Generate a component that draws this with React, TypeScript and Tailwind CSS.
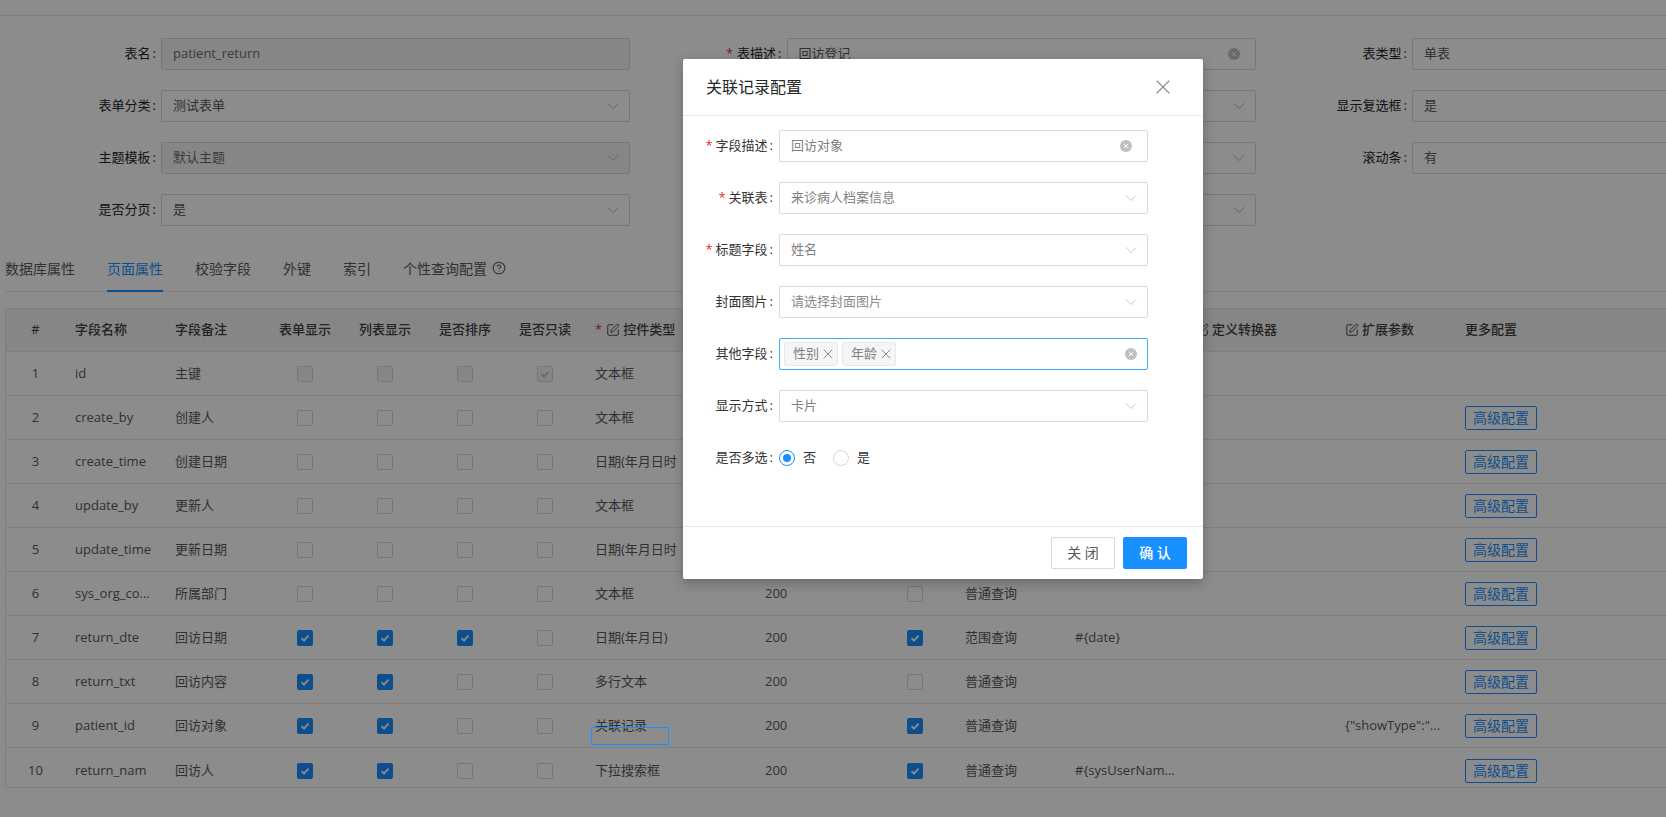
import { ChevronDown, CircleHelp, SquarePen, X } from "lucide-react"

const font = "font-['Open_Sans','Noto_Sans_CJK_SC',sans-serif]"

type FieldRow = {
  name: string
  note: string
  form?: boolean
  list?: boolean
  sort?: boolean
  control: string
  query?: boolean
  queryType?: string
  dict?: string
  ext?: string
}

const rows: FieldRow[] = [
  { name: "id", note: "主键", control: "文本框" },
  { name: "create_by", note: "创建人", control: "文本框" },
  { name: "create_time", note: "创建日期", control: "日期(年月日时" },
  { name: "update_by", note: "更新人", control: "文本框" },
  { name: "update_time", note: "更新日期", control: "日期(年月日时" },
  { name: "sys_org_co...", note: "所属部门", control: "文本框", queryType: "普通查询" },
  { name: "return_dte", note: "回访日期", form: true, list: true, sort: true, control: "日期(年月日)", query: true, queryType: "范围查询", dict: "#{date}" },
  { name: "return_txt", note: "回访内容", form: true, list: true, control: "多行文本", queryType: "普通查询" },
  { name: "patient_id", note: "回访对象", form: true, list: true, control: "关联记录", query: true, queryType: "普通查询", ext: '{"showType":"...' },
  { name: "return_nam", note: "回访人", form: true, list: true, control: "下拉搜索框", query: true, queryType: "普通查询", dict: "#{sysUserNam..." },
]

function Checkbox({ checked, disabled }: { checked?: boolean; disabled?: boolean }) {
  return (
    <span
      className={`mx-auto flex h-4 w-4 items-center justify-center rounded-[2px] border ${
        checked && !disabled
          ? "border-[#1890ff] bg-[#1890ff]"
          : disabled
            ? "border-[#d9d9d9] bg-[#f5f5f5]"
            : "border-[#d9d9d9] bg-white"
      }`}
    >
      {checked && (
        <svg viewBox="0 0 12 12" className="h-3 w-3" fill="none">
          <path d="M2.5 6.2 5 8.6 9.5 3.6" stroke={disabled ? "#bfbfbf" : "#fff"} strokeWidth="1.8" />
        </svg>
      )}
    </span>
  )
}

function OuterField({
  label,
  value,
  required,
  disabled,
  arrow,
  clear,
}: {
  label?: string
  value?: string
  required?: boolean
  disabled?: boolean
  arrow?: boolean
  clear?: boolean
}) {
  return (
    <div className="flex w-[625.5px] shrink-0 items-center">
      <div className="w-[156px] shrink-0 pr-[5px] text-right text-[13px] text-[#262626]">
        {required && <span className="mr-1 text-[#f5222d]">*</span>}
        {label}
        {label && <span className="ml-[2px]">:</span>}
      </div>
      <div
        className={`flex h-8 w-[469px] items-center justify-between rounded-[2px] border border-[#d9d9d9] pl-[11px] pr-[6px] text-[13px] ${
          disabled ? "bg-[#f5f5f5] text-[#6b6b6b]" : "bg-white text-[#595959]"
        }`}
      >
        <span>{value}</span>
        {arrow && <ChevronDown className="h-5 w-5 text-[#a6a6a6]" strokeWidth={1} />}
        {clear && (
          <span className="mr-[9px] flex h-3 w-3 items-center justify-center rounded-full bg-[#bfbfbf]">
            <X className="h-2 w-2 text-white" strokeWidth={3} />
          </span>
        )}
      </div>
    </div>
  )
}

function ModalField({
  label,
  required,
  focused,
  children,
  right,
}: {
  label: string
  required?: boolean
  focused?: boolean
  children: React.ReactNode
  right: "arrow" | "clear" | "clear-far"
}) {
  return (
    <div className="flex h-8 items-center">
      <div className="w-[96px] shrink-0 pr-[6px] text-right text-[13px] text-[#333]">
        {required && <span className="mr-[3px] text-[#f5222d]">*</span>}
        {label}
        <span className="ml-[2px]">:</span>
      </div>
      <div
        className={`flex h-8 w-[369px] items-center justify-between rounded-[2px] border pr-[6px] text-[13px] text-[#808080] ${
          focused ? "border-[#40a9ff] pl-1" : "border-[#d9d9d9] pl-[11px]"
        }`}
      >
        {children}
        {right === "arrow" ? (
          <ChevronDown className="h-5 w-5 text-[#bfbfbf]" strokeWidth={1} />
        ) : (
          <span
            className={`flex h-3 w-3 items-center justify-center rounded-full bg-[#bfbfbf] ${
              right === "clear" ? "mr-[9px]" : "mr-[4px]"
            }`}
          >
            <X className="h-2 w-2 text-white" strokeWidth={3} />
          </span>
        )}
      </div>
    </div>
  )
}

function Tag({ text }: { text: string }) {
  return (
    <span className="flex h-6 w-[54px] items-center rounded-[2px] border border-[#e8e8e8] bg-[#f5f5f5] pl-[8px] text-[13px] text-[#808080]">
      {text}
      <X className="ml-px h-4 w-4 text-[#8c8c8c]" strokeWidth={1.5} />
    </span>
  )
}

function HeaderEdit({ children, star }: { children: React.ReactNode; star?: boolean }) {
  return (
    <span className="flex items-center whitespace-nowrap">
      {star && <span className="mr-[4px] text-[#f5222d]">*</span>}
      <SquarePen className="mr-[3px] h-[14px] w-[14px]" strokeWidth={1.6} />
      {children}
    </span>
  )
}

export default function App() {
  return (
    <div className={`relative h-[817px] w-full overflow-hidden bg-white ${font}`}>
      <div className="h-[16px] border-b border-[#e8e8e8]" />

      <div className="flex flex-col gap-5 pl-[5px] pt-[22px]">
        <div className="flex">
          <OuterField label="表名" value="patient_return" disabled />
          <OuterField label="表描述" value="回访登记" required clear />
          <OuterField label="表类型" value="单表" />
        </div>
        <div className="flex">
          <OuterField label="表单分类" value="测试表单" arrow />
          <OuterField arrow />
          <OuterField label="显示复选框" value="是" />
        </div>
        <div className="flex">
          <OuterField label="主题模板" value="默认主题" arrow disabled />
          <OuterField arrow />
          <OuterField label="滚动条" value="有" />
        </div>
        <div className="flex">
          <OuterField label="是否分页" value="是" arrow />
          <OuterField arrow />
        </div>
      </div>

      <div className="ml-[5px] mt-5 flex h-[46px] gap-8 border-b border-[#e8e8e8] text-sm leading-[22px] text-[#595959]">
        <span className="pt-3">数据库属性</span>
        <span className="h-[46px] border-b-2 border-[#1890ff] pt-3 text-[#1890ff]">页面属性</span>
        <span className="pt-3">校验字段</span>
        <span className="pt-3">外键</span>
        <span className="pt-3">索引</span>
        <span className="flex items-start gap-[5px] pt-3">
          个性查询配置
          <CircleHelp className="mt-[3px] h-[14px] w-[14px]" strokeWidth={1.8} />
        </span>
      </div>

      <table className="ml-[5px] mt-4 w-[1800px] table-fixed border-separate border-spacing-0 border-l border-t border-[#e8e8e8] text-[13px] text-[#595959]">
        <colgroup>
          <col className="w-[59px]" />
          <col className="w-[100px]" />
          <col className="w-[100px]" />
          <col className="w-[80px]" />
          <col className="w-[80px]" />
          <col className="w-[80px]" />
          <col className="w-[80px]" />
          <col className="w-[170px]" />
          <col className="w-[120px]" />
          <col className="w-[80px]" />
          <col className="w-[110px]" />
          <col className="w-[120px]" />
          <col className="w-[150px]" />
          <col className="w-[120px]" />
          <col />
        </colgroup>
        <thead>
          <tr className="h-[43px] bg-[#f5f5f5] text-[#404040]">
            <th className="border-b border-[#e8e8e8] font-medium">#</th>
            <th className="border-b border-[#e8e8e8] px-[10px] text-left font-medium">字段名称</th>
            <th className="border-b border-[#e8e8e8] px-[10px] text-left font-medium">字段备注</th>
            <th className="border-b border-[#e8e8e8] font-medium">表单显示</th>
            <th className="border-b border-[#e8e8e8] font-medium">列表显示</th>
            <th className="border-b border-[#e8e8e8] font-medium">是否排序</th>
            <th className="border-b border-[#e8e8e8] font-medium">是否只读</th>
            <th className="border-b border-[#e8e8e8] pl-[10px] text-left font-medium">
              <HeaderEdit star>控件类型</HeaderEdit>
            </th>
            <th className="border-b border-[#e8e8e8]" />
            <th className="border-b border-[#e8e8e8]" />
            <th className="border-b border-[#e8e8e8]" />
            <th className="border-b border-[#e8e8e8]" />
            <th className="border-b border-[#e8e8e8] pl-[10px] text-left font-medium">
              <HeaderEdit>定义转换器</HeaderEdit>
            </th>
            <th className="border-b border-[#e8e8e8] pl-[10px] text-left font-medium">
              <HeaderEdit>扩展参数</HeaderEdit>
            </th>
            <th className="border-b border-[#e8e8e8] pl-[10px] text-left font-medium">更多配置</th>
          </tr>
        </thead>
        <tbody>
          {rows.map((row, i) => (
            <tr key={row.name} className={i === 9 ? "h-[40px] [&>td]:pt-[6px]" : "h-[44px]"}>
              <td className="border-b border-[#e8e8e8] text-center">{i + 1}</td>
              <td className="border-b border-[#e8e8e8] px-[10px] whitespace-nowrap">{row.name}</td>
              <td className="border-b border-[#e8e8e8] px-[10px]">{row.note}</td>
              <td className="border-b border-[#e8e8e8]">
                <Checkbox checked={row.form} disabled={i === 0} />
              </td>
              <td className="border-b border-[#e8e8e8]">
                <Checkbox checked={row.list} disabled={i === 0} />
              </td>
              <td className="border-b border-[#e8e8e8]">
                <Checkbox checked={row.sort} disabled={i === 0} />
              </td>
              <td className="border-b border-[#e8e8e8]">
                <Checkbox checked={i === 0} disabled={i === 0} />
              </td>
              <td className="border-b border-[#e8e8e8] px-[10px] whitespace-nowrap">{row.control}</td>
              <td className="border-b border-[#e8e8e8] px-[10px]">200</td>
              <td className="border-b border-[#e8e8e8]">
                <Checkbox checked={row.query} />
              </td>
              <td className="border-b border-[#e8e8e8] px-[10px]">{row.queryType}</td>
              <td className="border-b border-[#e8e8e8] px-[10px] whitespace-nowrap">{row.dict}</td>
              <td className="border-b border-[#e8e8e8]" />
              <td className="border-b border-[#e8e8e8] px-[10px] whitespace-nowrap">{row.ext}</td>
              <td className="border-b border-[#e8e8e8] px-[10px]">
                {i > 0 && (
                  <span className="flex h-6 w-[72px] items-center justify-center rounded-[2px] border border-[#1890ff] text-sm text-[#1890ff]">
                    高级配置
                  </span>
                )}
              </td>
            </tr>
          ))}
        </tbody>
      </table>

      {/* modal mask */}
      <div className="absolute inset-0 bg-black/45" />

      {/* cell selection box left above the mask */}
      <div className="absolute left-[591px] top-[727px] h-[18px] w-[78px] border border-[#1890ff]" />

      <div className="absolute left-[683px] top-[59px] flex h-[520px] w-[520px] flex-col rounded-[2px] bg-white shadow-[0_4px_12px_rgba(0,0,0,0.25)]">
        <div className="flex h-[57px] shrink-0 items-center justify-between border-b border-[#e8e8e8] pl-[23px] pr-[28px]">
          <span className="text-base text-[#262626]">关联记录配置</span>
          <X className="h-6 w-6 text-[#8c8c8c]" strokeWidth={1.1} />
        </div>

        <div className="flex flex-1 flex-col gap-5 pt-[14px]">
          <ModalField label="字段描述" required right="clear">
            <span>回访对象</span>
          </ModalField>
          <ModalField label="关联表" required right="arrow">
            <span>来诊病人档案信息</span>
          </ModalField>
          <ModalField label="标题字段" required right="arrow">
            <span>姓名</span>
          </ModalField>
          <ModalField label="封面图片" right="arrow">
            <span className="text-[#8c8c8c]">请选择封面图片</span>
          </ModalField>
          <ModalField label="其他字段" focused right="clear-far">
            <span className="flex gap-1">
              <Tag text="性别" />
              <Tag text="年龄" />
            </span>
          </ModalField>
          <ModalField label="显示方式" right="arrow">
            <span>卡片</span>
          </ModalField>
          <div className="flex h-8 items-center text-[13px] text-[#333]">
            <div className="w-[96px] shrink-0 pr-[6px] text-right">
              是否多选<span className="ml-[2px]">:</span>
            </div>
            <span className="flex h-4 w-4 items-center justify-center rounded-full border border-[#1890ff]">
              <span className="h-2 w-2 rounded-full bg-[#1890ff]" />
            </span>
            <span className="ml-2 w-[16px]">否</span>
            <span className="ml-[14px] h-4 w-4 rounded-full border border-[#d9d9d9]" />
            <span className="ml-2">是</span>
          </div>
        </div>

        <div className="flex h-[53px] shrink-0 items-center justify-end gap-[8px] border-t border-[#e8e8e8] pr-4">
          <button className="h-8 w-16 rounded-[2px] border border-[#d9d9d9] bg-white text-sm text-[#595959]">
            关 闭
          </button>
          <button className="h-8 w-16 rounded-[2px] bg-[#1890ff] text-sm font-medium text-white">
            确 认
          </button>
        </div>
      </div>
    </div>
  )
}
